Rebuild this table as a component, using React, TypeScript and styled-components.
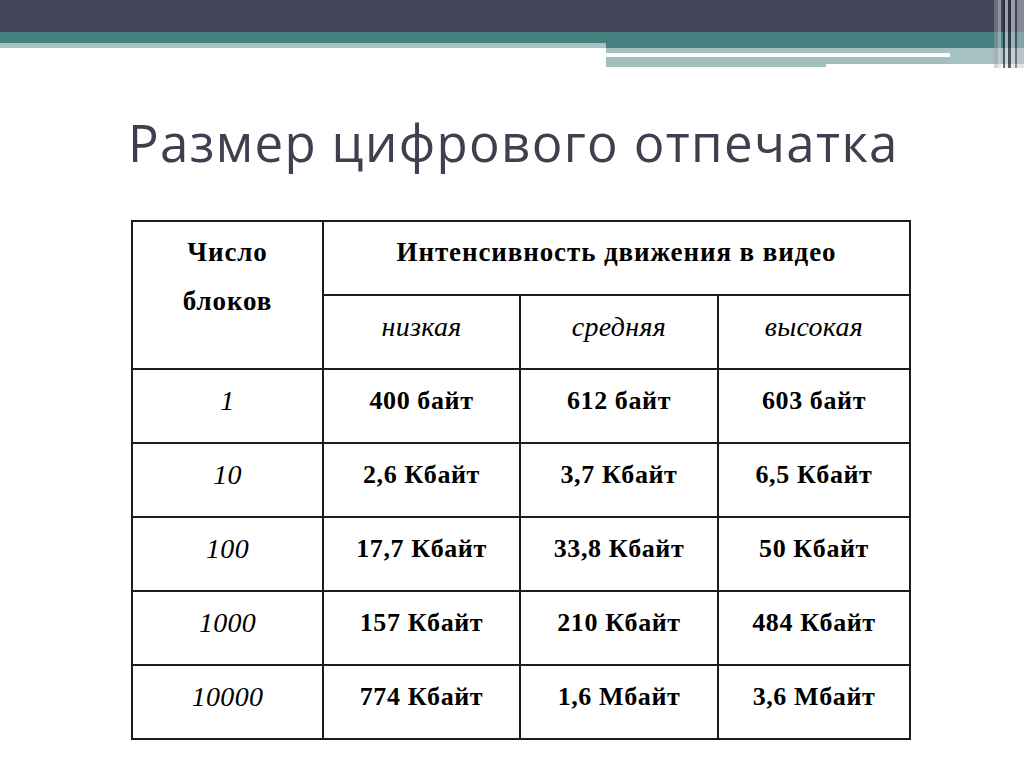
import React from 'react';
import styled, { createGlobalStyle } from 'styled-components';

const GlobalStyle = createGlobalStyle`
    html, body {
        margin: 0;
        padding: 0;
        background: #ffffff;
    }
    body {
        width: 1024px;
        height: 767px;
        overflow: hidden;
    }
`;

const Slide = styled.div`
    width: 1024px;
    height: 767px;
    background: #ffffff;
    display: flex;
    flex-direction: column;
`;

const Deco = styled.div`
    position: relative;
    height: 68px;
    display: flex;
    flex-direction: column;
`;

const DarkBand = styled.div`
    height: 32px;
    background: #434558;
`;

const Stripes = styled.div`
    display: flex;
`;

const Col = styled.div<{ $w?: number }>`
    display: flex;
    flex-direction: column;
    ${(p) => (p.$w ? `width: ${p.$w}px;` : 'flex: 1;')}
`;

const Row = styled.div`
    display: flex;
`;

const Band = styled.div<{ $h: number; $c: string; $w?: number }>`
    height: ${(p) => p.$h}px;
    background: ${(p) => p.$c};
    ${(p) => (p.$w ? `width: ${p.$w}px;` : '')}
`;

const Verticals = styled.div`
    position: absolute;
    top: 0;
    right: 0;
    width: 30px;
    height: 68px;
    background: linear-gradient(
        to right,
        rgba(160, 160, 175, 0.45) 0px,
        rgba(160, 160, 175, 0.45) 4px,
        rgba(210, 210, 220, 0.55) 4px,
        rgba(210, 210, 220, 0.55) 7px,
        transparent 7px,
        transparent 9px,
        rgba(40, 40, 55, 0.7) 9px,
        rgba(40, 40, 55, 0.7) 11px,
        rgba(220, 220, 228, 0.6) 11px,
        rgba(220, 220, 228, 0.6) 14px,
        rgba(40, 40, 55, 0.75) 14px,
        rgba(40, 40, 55, 0.75) 17px,
        rgba(215, 215, 225, 0.6) 17px,
        rgba(215, 215, 225, 0.6) 21px,
        rgba(60, 60, 75, 0.6) 21px,
        rgba(60, 60, 75, 0.6) 23px,
        rgba(200, 200, 210, 0.5) 23px,
        rgba(200, 200, 210, 0.5) 30px
    );
`;

const Title = styled.h1`
    margin: 44px 0 0 128px;
    font-family: "Open Sans", "DejaVu Sans", sans-serif;
    font-weight: 400;
    font-size: 51px;
    line-height: 60px;
    letter-spacing: 1.35px;
    color: #3e4050;
    white-space: nowrap;
`;

const Table = styled.table`
    margin: 48px 0 0 131px;
    width: 778px;
    table-layout: fixed;
    border-collapse: collapse;
    font-family: "Liberation Serif", "Times New Roman", serif;
    color: #000000;
`;

const Cell = styled.td<{ $italic?: boolean; $head?: boolean }>`
    border: 2px solid #1c1c1c;
    height: 74px;
    box-sizing: border-box;
    padding: ${(p) => (p.$head ? '6px 4px 0' : '16px 4px 0')};
    vertical-align: top;
    text-align: center;
    font-size: ${(p) => (p.$head ? '27px' : p.$italic ? '28px' : '26px')};
    line-height: ${(p) => (p.$head ? '49px' : '30px')};
    font-weight: ${(p) => (p.$italic ? 400 : 700)};
    font-style: ${(p) => (p.$italic ? 'italic' : 'normal')};
    letter-spacing: ${(p) => (p.$head ? '0.9px' : p.$italic ? '0.3px' : '0.6px')};
`;

const rows: [string, string, string, string][] = [
    ['1', '400 байт', '612 байт', '603 байт'],
    ['10', '2,6 Кбайт', '3,7 Кбайт', '6,5 Кбайт'],
    ['100', '17,7 Кбайт', '33,8 Кбайт', '50 Кбайт'],
    ['1000', '157 Кбайт', '210 Кбайт', '484 Кбайт'],
    ['10000', '774 Кбайт', '1,6 Мбайт', '3,6 Мбайт'],
];

const App = () => {
    return (
        <Slide>
            <GlobalStyle />
            <Deco>
                <DarkBand />
                <Stripes>
                    <Col $w={606}>
                        <Band $h={11} $c="#43807f" />
                        <Band $h={5} $c="#a6c1c1" />
                    </Col>
                    <Col>
                        <Band $h={16} $c="#43807f" />
                        <Row>
                            <Col $w={344}>
                                <Band $h={5} $c="#a6c1c1" />
                                <Band $h={4} $c="#ffffff" />
                                <Row>
                                    <Band $h={10} $w={220} $c="#a3bfbd" />
                                    <Band $h={7} $w={124} $c="#a3bfbd" />
                                </Row>
                            </Col>
                            <Col>
                                <Band $h={16} $c="#a6c1c1" />
                            </Col>
                        </Row>
                    </Col>
                </Stripes>
                <Verticals />
            </Deco>

            <Title>Размер цифрового отпечатка</Title>

            <Table>
                <colgroup>
                    <col style={{ width: 191 }} />
                    <col style={{ width: 197 }} />
                    <col style={{ width: 198 }} />
                    <col style={{ width: 192 }} />
                </colgroup>
                <tbody>
                    <tr>
                        <Cell $head rowSpan={2}>
                            Число
                            <br />
                            блоков
                        </Cell>
                        <Cell $head colSpan={3}>
                            Интенсивность движения в видео
                        </Cell>
                    </tr>
                    <tr>
                        <Cell $italic>низкая</Cell>
                        <Cell $italic>средняя</Cell>
                        <Cell $italic>высокая</Cell>
                    </tr>
                    {rows.map((r) => (
                        <tr key={r[0]}>
                            <Cell $italic>{r[0]}</Cell>
                            <Cell>{r[1]}</Cell>
                            <Cell>{r[2]}</Cell>
                            <Cell>{r[3]}</Cell>
                        </tr>
                    ))}
                </tbody>
            </Table>
        </Slide>
    );
};

export default App;
